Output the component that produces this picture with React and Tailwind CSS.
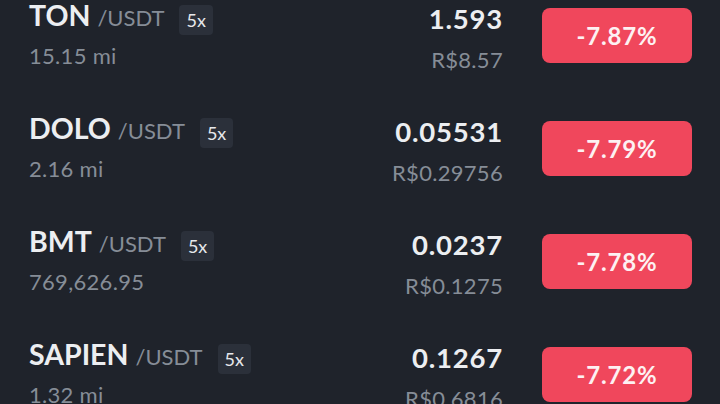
const rows = [
  { sym: "TON", vol: "15.15 mi", price: "1.593", brl: "R$8.57", pct: "-7.87%" },
  { sym: "DOLO", vol: "2.16 mi", price: "0.05531", brl: "R$0.29756", pct: "-7.79%" },
  { sym: "BMT", vol: "769,626.95", price: "0.0237", brl: "R$0.1275", pct: "-7.78%" },
  { sym: "SAPIEN", vol: "1.32 mi", price: "0.1267", brl: "R$0.6816", pct: "-7.72%" },
];

function Row({ r }) {
  return (
    <div className="flex items-start h-[113px] pl-[29px] pr-[28px] shrink-0">
      <div className="flex-1 min-w-0">
        <div className="flex items-baseline">
          <span className="text-[28.5px] leading-[33px] font-bold text-[#eceef1]">{r.sym}</span>
          <span className="ml-[7px] text-[22px] text-[#868d97]">/USDT</span>
          <span className="ml-[15px] self-start mt-[6px] h-[30px] px-[7px] rounded-[4px] bg-[#2b303a] text-[18px] leading-[30px] text-[#e6e8eb]">
            5x
          </span>
        </div>
        <div className="mt-[8px] text-[22px] leading-[26px] tracking-[0.3px] text-[#868d97]">{r.vol}</div>
      </div>
      <div className="flex flex-col items-end mt-[4px]">
        <span className="text-[27.5px] leading-[32px] font-bold tracking-[0.8px] text-[#eceef1]">{r.price}</span>
        <span className="mt-[12px] text-[22px] leading-[26px] tracking-[0.3px] text-[#868d97]">{r.brl}</span>
      </div>
      <div className="ml-[39px] mt-[9px] w-[150px] h-[55px] rounded-[8px] bg-[#f0475c] flex items-center justify-center text-[24px] font-bold tracking-[0.8px] text-[#fdf1f2]">
        {r.pct}
      </div>
    </div>
  );
}

export default function App() {
  return (
    <div
      className="w-[720px] h-[404px] overflow-hidden bg-[#1f232b] flex flex-col"
      style={{ fontFamily: "Lato, 'Noto Sans', sans-serif" }}
    >
      <div className="-mt-[1px] flex flex-col">
        {rows.map((r) => (
          <Row key={r.sym} r={r} />
        ))}
      </div>
    </div>
  );
}
